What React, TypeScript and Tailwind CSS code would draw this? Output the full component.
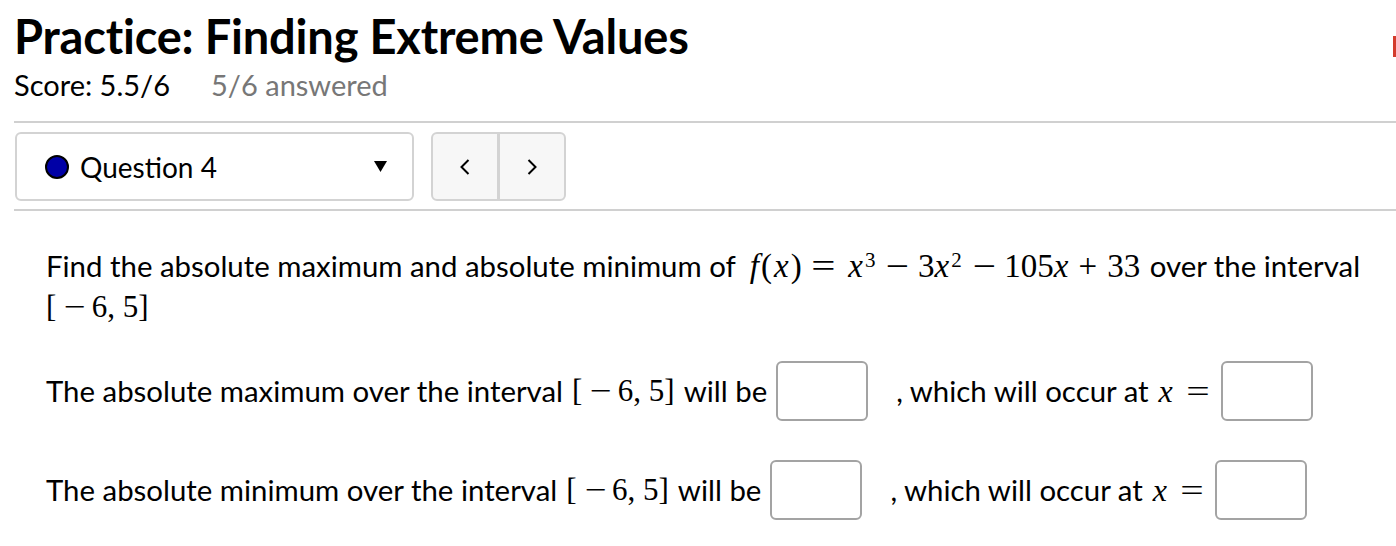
import React from "react";

const body = { fontFamily: "Lato, 'Open Sans', sans-serif" };
const tex = { fontFamily: "'Liberation Serif', 'DejaVu Serif', serif" };

function V({ children }: { children: React.ReactNode }) {
  return <span className="italic">{children}</span>;
}

function Eq() {
  return <span className="inline-block scale-x-[1.3]">=</span>;
}

function Minus() {
  return <span className="inline-block scale-x-[1.25]">−</span>;
}

function Interval() {
  return (
    <span style={tex} className="text-[31px] whitespace-nowrap">
      [<span className="ml-[10px] mr-[8px]"><Minus /></span>6, 5]
    </span>
  );
}

function AnswerBox() {
  return (
    <span className="block h-[60px] w-[92px] rounded-[6px] border-2 border-[#a3a3a3] bg-white" />
  );
}

function AnswerRow({ kind }: { kind: string }) {
  return (
    <div className="flex h-[60px] items-center">
      <span>The absolute {kind} over the interval</span>
      <span className="ml-[9px]"><Interval /></span>
      <span className="ml-[9px]">will be</span>
      <span className="ml-[9px]"><AnswerBox /></span>
      <span className="ml-[28px]">, which will occur at</span>
      <span style={tex} className="ml-[10px] text-[32px]">
        <V>x</V><span className="ml-[16px]"><Eq /></span>
      </span>
      <span className="ml-[14px]"><AnswerBox /></span>
    </div>
  );
}

export default function App() {
  return (
    <div className="relative min-h-[546px] w-[1396px] overflow-hidden bg-white text-black" style={body}>
      <div className="absolute right-0 top-[36px] h-[21px] w-[3px] bg-[#d33b2c]" />

      <div className="pl-[14px] pt-[8px]">
        <h1 className="text-[47px] font-bold leading-[56px] tracking-[-0.2px]">
          Practice: Finding Extreme Values
        </h1>
        <div className="mt-[5px] flex h-[32px] items-center text-[29px]">
          <span>Score: 5.5/6</span>
          <span className="ml-[41px] text-[#777]">5/6 answered</span>
        </div>
      </div>

      <div className="ml-[14px] mt-[20px] h-[2px] bg-[#d0d0d0]" />

      <div className="flex items-center gap-[17px] px-[15px] pt-[9px]">
        <div className="flex h-[69px] w-[399px] items-center rounded-[6px] border-2 border-[#d3d3d3] pl-[28px] pr-[25px]">
          <span className="h-[24px] w-[24px] rounded-full border-2 border-black bg-[#0000a6]" />
          <span className="ml-[11px] text-[28px]">Question 4</span>
          <svg className="ml-auto" width="13" height="11" viewBox="0 0 13 11">
            <polygon points="0,0 13,0 6.5,11" fill="black" />
          </svg>
        </div>
        <div className="flex h-[69px] w-[135px] overflow-hidden rounded-[6px] border-2 border-[#d3d3d3] bg-[#f7f7f7]">
          <div className="flex flex-1 items-center justify-center border-r-[3px] border-[#d3d3d3]">
            <svg width="12" height="20" viewBox="0 0 12 20" fill="none" stroke="black" strokeWidth="2">
              <path d="M9.5 3 L2.5 10 L9.5 17" />
            </svg>
          </div>
          <div className="flex flex-1 items-center justify-center">
            <svg width="12" height="20" viewBox="0 0 12 20" fill="none" stroke="black" strokeWidth="2">
              <path d="M2.5 3 L9.5 10 L2.5 17" />
            </svg>
          </div>
        </div>
      </div>

      <div className="ml-[14px] mt-[8px] h-[2px] bg-[#d0d0d0]" />

      <div className="pl-[46px] pt-[35px] text-[29.4px]">
        <p className="leading-[39px]">
          Find the absolute maximum and absolute minimum of{" "}
          <span style={tex} className="ml-[7px] text-[33px] whitespace-nowrap">
            <span className="tracking-[2px]"><V>f</V>(<V>x</V>)</span>
            <span className="ml-[10px] mr-[16px]"><Eq /></span>
            <V>x</V>
            <sup className="ml-[2px] text-[21px]">3</sup>
            <span className="ml-[13px] mr-[11px]"><Minus /></span>3<V>x</V>
            <sup className="ml-[2px] text-[21px]">2</sup>
            <span className="ml-[13px] mr-[11px]"><Minus /></span>105<V>x</V>
            <span className="ml-[10px] mr-[10px]">+</span>33
          </span>{" "}
          <span className="ml-[2px]">over the interval</span>
          <br />
          <Interval />
        </p>

        <div className="mt-[35px]">
          <AnswerRow kind="maximum" />
        </div>
        <div className="mt-[39px]">
          <AnswerRow kind="minimum" />
        </div>
      </div>
    </div>
  );
}
